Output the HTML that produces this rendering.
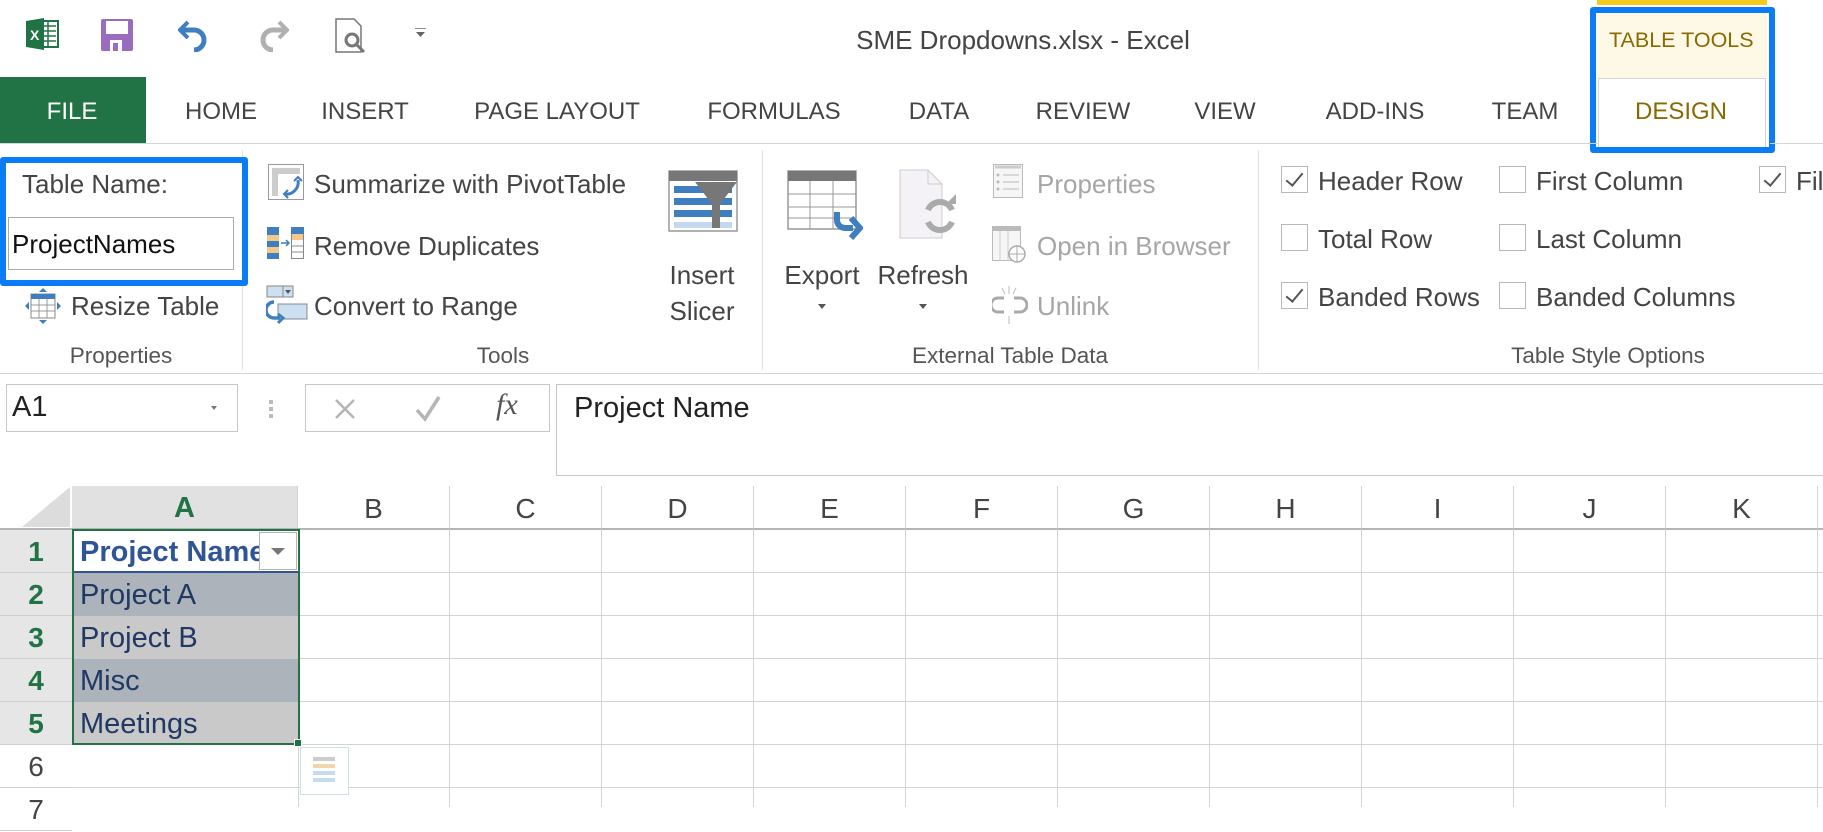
<!DOCTYPE html>
<html><head><meta charset="utf-8"><style>
*{margin:0;padding:0;box-sizing:border-box}
body{width:1823px;height:807px;overflow:hidden;background:#fff;font-family:"Liberation Sans",sans-serif;color:#444;position:relative}
.a{position:absolute;white-space:nowrap}
.tab{position:absolute;top:98px;font-size:24px;color:#444;transform:translateX(-50%)}
.rt{font-size:26px;color:#444}
.gl{position:absolute;top:343px;font-size:22.5px;color:#555;transform:translateX(-50%)}
.gray{color:#a6a6a6}
.cb{position:absolute;width:27px;height:27px;border:1px solid #b8b8b8;background:#fff}
.ck::after{content:"";position:absolute;left:8px;top:2px;width:7px;height:15px;border:solid #555;border-width:0 2px 2px 0;transform:rotate(40deg)}
.col{position:absolute;top:486px;height:43px;font-size:28px;color:#444;text-align:center;line-height:45px;border-right:1px solid #d4d4d4}
.vl{position:absolute;top:529px;height:278px;width:1px;background:#d4d4d4}
.hl{position:absolute;left:72px;width:1751px;height:1px;background:#d4d4d4}
.rn{position:absolute;left:0;width:72px;height:43px;font-size:28px;line-height:44px;text-align:center;background:#e6e6e6;color:#217346;font-weight:bold;border-bottom:1px solid #cfcfcf}
.cell{position:absolute;left:73px;width:225px;height:43px;font-size:29px;line-height:44px;padding-left:7px;color:#203864}
</style></head><body>
<!-- quick access toolbar -->
<svg class="a" style="left:26px;top:18px" width="34" height="32" viewBox="0 0 34 32"><rect x="10" y="3" width="22" height="26" fill="#fff" stroke="#217346" stroke-width="2"/><path d="M16 8h14M16 13h14M16 18h14M16 23h14M22 4v24" stroke="#217346" stroke-width="1.5"/><path d="M0 3l18-3v32L0 29z" fill="#217346"/><text x="4" y="22" font-size="14" font-weight="bold" fill="#fff" font-family="Liberation Sans">X</text></svg>
<svg class="a" style="left:101px;top:19px" width="32" height="32"><rect width="32" height="32" rx="2" fill="#9b6bbd"/><rect x="5" y="2" width="22" height="13" fill="#fff"/><rect x="9" y="21" width="12" height="11" fill="#fff"/><rect x="12" y="24" width="5" height="8" fill="#9b6bbd"/></svg>
<svg class="a" style="left:178px;top:18px" width="34" height="34"><path d="M10 4L2 12l8 8" fill="none" stroke="#3f7fbf" stroke-width="4"/><path d="M4 12h12a10 10 0 0 1 0 20" fill="none" stroke="#3f7fbf" stroke-width="5"/></svg>
<svg class="a" style="left:255px;top:18px" width="34" height="34"><path d="M24 4l8 8-8 8" fill="none" stroke="#b0b0b0" stroke-width="4"/><path d="M30 12H18a10 10 0 0 0 0 20" fill="none" stroke="#b0b0b0" stroke-width="5"/></svg>
<svg class="a" style="left:335px;top:18px" width="36" height="36"><path d="M1 1h18l7 7v26H1z" fill="#fff" stroke="#777" stroke-width="1.5"/><circle cx="17" cy="22" r="6" fill="none" stroke="#777" stroke-width="3"/><path d="M21 26l8 8" stroke="#777" stroke-width="3"/></svg>
<svg class="a" style="left:415px;top:28px" width="11" height="10"><path d="M0 0h11" stroke="#666" stroke-width="1.5"/><path d="M1 4h9l-4.5 5z" fill="#666"/></svg>
<div class="a" style="left:1023px;top:25px;font-size:26px;color:#444;transform:translateX(-50%)">SME Dropdowns.xlsx - Excel</div>
<!-- table tools -->
<div class="a" style="left:1597px;top:0;width:170px;height:5px;background:#f5cb1d"></div>
<div class="a" style="left:1597px;top:12px;width:170px;height:66px;background:#fdf9e6"></div>
<div class="a" style="left:1609px;top:28px;font-size:21.5px;color:#8a6a00">TABLE TOOLS</div>
<div class="a" style="left:1598px;top:78px;width:168px;height:70px;border:1px solid #d4d4d4;border-bottom:none;background:#fff"></div>
<div class="a" style="left:1590px;top:7px;width:185px;height:146px;border:6px solid #0a7cf7;border-radius:3px"></div>
<!-- tabs -->
<div class="a" style="left:0;top:77px;width:146px;height:67px;background:#217346"></div>
<div class="tab" style="left:72px;color:#fff">FILE</div>
<div class="tab" style="left:221px">HOME</div>
<div class="tab" style="left:365px">INSERT</div>
<div class="tab" style="left:557px">PAGE LAYOUT</div>
<div class="tab" style="left:774px">FORMULAS</div>
<div class="tab" style="left:939px">DATA</div>
<div class="tab" style="left:1083px">REVIEW</div>
<div class="tab" style="left:1225px">VIEW</div>
<div class="tab" style="left:1375px">ADD-INS</div>
<div class="tab" style="left:1525px">TEAM</div>
<div class="tab" style="left:1681px;color:#8a6a00">DESIGN</div>
<div class="a" style="left:0;top:143px;width:1598px;height:1px;background:#d4d4d4"></div>
<div class="a" style="left:1770px;top:143px;width:53px;height:1px;background:#d4d4d4"></div>
<!-- ribbon -->
<div class="a" style="left:0;top:373px;width:1823px;height:1px;background:#d4d4d4"></div>
<div class="a" style="left:242px;top:150px;width:1px;height:220px;background:#e1e1e1"></div>
<div class="a" style="left:762px;top:150px;width:1px;height:220px;background:#e1e1e1"></div>
<div class="a" style="left:1258px;top:150px;width:1px;height:220px;background:#e1e1e1"></div>
<div class="a" style="left:0;top:157px;width:248px;height:129px;border:6px solid #0a7cf7;border-radius:3px"></div>
<div class="a rt" style="left:22px;top:169px">Table Name:</div>
<div class="a" style="left:8px;top:217px;width:226px;height:53px;border:1px solid #ababab"></div>
<div class="a" style="left:12px;top:229px;font-size:26px;color:#111">ProjectNames</div>
<svg class="a" style="left:25px;top:288px" width="36" height="36"><path d="M18 0l4 4h-8zM18 36l4-4h-8zM0 18l4-4v8zM36 18l-4-4v8z" fill="#3f7fbf"/><rect x="6" y="6" width="24" height="24" fill="#fff" stroke="#888"/><rect x="6" y="6" width="24" height="5" fill="#3f7fbf"/><path d="M6 17h24M6 23h24M14 11v19M22 11v19" stroke="#999"/></svg>
<div class="a rt" style="left:71px;top:291px">Resize Table</div>
<div class="gl" style="left:121px">Properties</div>
<!-- tools -->
<svg class="a" style="left:268px;top:164px" width="36" height="36"><rect x="0.5" y="0.5" width="35" height="35" fill="#fff" stroke="#999"/><rect x="4" y="4" width="28" height="6" fill="#ccc"/><rect x="4" y="4" width="6" height="28" fill="#ccc"/><path d="M30 16a12 12 0 0 1-14 14" fill="none" stroke="#3f7fbf" stroke-width="3"/><path d="M26 17l4-4 4 4M20 26l-4 4 4 4" fill="none" stroke="#3f7fbf" stroke-width="2"/></svg>
<div class="a rt" style="left:314px;top:169px">Summarize with PivotTable</div>
<svg class="a" style="left:267px;top:227px" width="38" height="32"><rect x="0" y="0" width="12" height="32" fill="#3f7fbf"/><rect x="0" y="8" width="12" height="6" fill="#f3c98b"/><rect x="0" y="20" width="12" height="6" fill="#f3c98b"/><rect x="24.5" y="0.5" width="12" height="31" fill="#fff" stroke="#888"/><rect x="24" y="0" width="13" height="7" fill="#3f7fbf"/><rect x="25" y="7" width="11" height="6" fill="#f3c98b"/><path d="M25 19h12M25 25h12" stroke="#888"/><path d="M14 16h8M19 13l3 3-3 3" fill="none" stroke="#3f7fbf" stroke-width="1.5"/></svg>
<div class="a rt" style="left:314px;top:231px">Remove Duplicates</div>
<svg class="a" style="left:266px;top:285px" width="42" height="40"><rect x="1" y="1" width="26" height="11" fill="#cde0f2" stroke="#888"/><path d="M17 1v11" stroke="#888"/><path d="M19 5h6l-3 4z" fill="#555"/><rect x="12" y="19" width="29" height="15" fill="#cde0f2" stroke="#888"/><path d="M8 17a8 8 0 0 0 0 16h6" fill="none" stroke="#3f7fbf" stroke-width="3.5"/><path d="M12 29l5 4-5 5" fill="none" stroke="#3f7fbf" stroke-width="3"/></svg>
<div class="a rt" style="left:314px;top:291px">Convert to Range</div>
<svg class="a" style="left:668px;top:170px" width="70" height="62"><rect x="1" y="1" width="68" height="60" fill="#fff" stroke="#999" stroke-width="1.5"/><rect x="1" y="1" width="68" height="10" fill="#777"/><rect x="6" y="16" width="58" height="7" fill="#3f7fbf"/><rect x="6" y="28" width="58" height="7" fill="#3f7fbf"/><rect x="6" y="40" width="58" height="7" fill="#3f7fbf"/><rect x="6" y="52" width="58" height="6" fill="#c5d9ee"/><path d="M27 12h42L52 34v24h-8V34z" fill="#777"/></svg>
<div class="a rt" style="left:702px;top:260px;transform:translateX(-50%)">Insert</div>
<div class="a rt" style="left:702px;top:296px;transform:translateX(-50%)">Slicer</div>
<div class="gl" style="left:503px">Tools</div>
<!-- external -->
<svg class="a" style="left:787px;top:170px" width="76" height="72"><rect x="1" y="1" width="68" height="58" fill="#fff" stroke="#999" stroke-width="1.5"/><rect x="1" y="1" width="68" height="10" fill="#777"/><path d="M1 24h68M1 37h68M1 48h68M23 11v48M46 11v48" stroke="#999"/><path d="M50 42v8a8 8 0 0 0 8 8h8" fill="none" stroke="#3f7fbf" stroke-width="6"/><path d="M64 48l9 10-9 10" fill="none" stroke="#3f7fbf" stroke-width="6"/></svg>
<div class="a rt" style="left:822px;top:260px;transform:translateX(-50%)">Export</div>
<div class="a" style="left:818px;top:304px;border:4px solid transparent;border-top:5px solid #555"></div>
<svg class="a" style="left:898px;top:168px" width="68" height="76"><path d="M2 2h28l14 14v54H2z" fill="#f4f2f6" stroke="#ccc"/><path d="M30 2v14h14" fill="none" stroke="#ccc"/><path d="M54 42a13 13 0 0 0-24 0M30 54a13 13 0 0 0 24 0" fill="none" stroke="#aaa" stroke-width="6"/><path d="M48 36l10 0 0-10z" fill="#aaa"/></svg>
<div class="a rt" style="left:923px;top:260px;transform:translateX(-50%)">Refresh</div>
<div class="a" style="left:919px;top:304px;border:4px solid transparent;border-top:5px solid #555"></div>
<svg class="a" style="left:993px;top:164px" width="30" height="34"><rect x="0.5" y="0.5" width="29" height="33" fill="#f6f6f6" stroke="#bbb"/><path d="M2 3h26" stroke="#ccc" stroke-width="3"/><path d="M10 11h16M10 18h16M10 25h16" stroke="#bbb"/><circle cx="5" cy="11" r="1.5" fill="#bbb"/><circle cx="5" cy="18" r="1.5" fill="#bbb"/><circle cx="5" cy="25" r="1.5" fill="#bbb"/></svg>
<div class="a rt gray" style="left:1037px;top:169px">Properties</div>
<svg class="a" style="left:992px;top:226px" width="36" height="38"><rect x="0.5" y="0.5" width="28" height="34" fill="#f6f6f6" stroke="#bbb"/><rect x="0" y="0" width="29" height="5" fill="#bbb"/><path d="M8 5v30M16 5v30" stroke="#ccc"/><circle cx="25" cy="28" r="8" fill="#fff" stroke="#aaa" stroke-width="1.5"/><path d="M17 28h16M25 20v16" stroke="#aaa"/></svg>
<div class="a rt gray" style="left:1037px;top:231px">Open in Browser</div>
<svg class="a" style="left:992px;top:286px" width="36" height="38"><path d="M12 12H6a6 6 0 0 0 0 14h6M22 12h6a6 6 0 0 1 0 14h-6" fill="none" stroke="#aaa" stroke-width="3"/><path d="M17 0v8M17 30v8M10 2l3 6M24 2l-3 6" stroke="#bbb"/></svg>
<div class="a rt gray" style="left:1037px;top:291px">Unlink</div>
<div class="gl" style="left:1010px">External Table Data</div>
<!-- style options -->
<div class="cb ck" style="left:1281px;top:166px"></div><div class="a rt" style="left:1318px;top:166px">Header Row</div>
<div class="cb" style="left:1499px;top:166px"></div><div class="a rt" style="left:1536px;top:166px">First Column</div>
<div class="cb ck" style="left:1759px;top:166px"></div><div class="a rt" style="left:1796px;top:166px">Filter</div>
<div class="cb" style="left:1281px;top:224px"></div><div class="a rt" style="left:1318px;top:224px">Total Row</div>
<div class="cb" style="left:1499px;top:224px"></div><div class="a rt" style="left:1536px;top:224px">Last Column</div>
<div class="cb ck" style="left:1281px;top:282px"></div><div class="a rt" style="left:1318px;top:282px">Banded Rows</div>
<div class="cb" style="left:1499px;top:282px"></div><div class="a rt" style="left:1536px;top:282px">Banded Columns</div>
<div class="gl" style="left:1608px">Table Style Options</div>
<!-- formula bar -->
<div class="a" style="left:6px;top:384px;width:232px;height:48px;border:1px solid #c6c6c6"></div>
<div class="a" style="left:12px;top:391px;font-size:29px;color:#222">A1</div>
<div class="a" style="left:211px;top:406px;border:3px solid transparent;border-top:4px solid #777"></div>
<div class="a" style="left:269px;top:400px;width:4px;height:4px;background:#bbb;box-shadow:0 7px 0 #bbb,0 14px 0 #bbb"></div>
<div class="a" style="left:305px;top:384px;width:245px;height:48px;border:1px solid #c6c6c6"></div>
<svg class="a" style="left:333px;top:397px" width="24" height="24"><path d="M3 3l18 18M21 3L3 21" stroke="#b5b5b5" stroke-width="2.5"/></svg>
<svg class="a" style="left:414px;top:395px" width="28" height="28"><path d="M3 15l8 9L25 2" fill="none" stroke="#b5b5b5" stroke-width="3.5"/></svg>
<div class="a" style="left:496px;top:388px;font-size:30px;font-style:italic;font-family:'Liberation Serif',serif;color:#555">fx</div>
<div class="a" style="left:556px;top:384px;width:1280px;height:92px;border:1px solid #c6c6c6"></div>
<div class="a" style="left:574px;top:392px;font-size:29px;color:#222">Project Name</div>
<!-- grid headers -->
<div class="a" style="left:0;top:486px;width:72px;height:43px;background:#fff"></div>
<svg class="a" style="left:20px;top:487px" width="50" height="40"><path d="M50 0v40H2z" fill="#dcdcdc"/></svg>
<div class="col" style="left:72px;width:226px;background:#e1e1e1;color:#217346;font-weight:bold;font-size:29px">A</div>
<div class="col" style="left:298px;width:152px">B</div>
<div class="col" style="left:450px;width:152px">C</div>
<div class="col" style="left:602px;width:152px">D</div>
<div class="col" style="left:754px;width:152px">E</div>
<div class="col" style="left:906px;width:152px">F</div>
<div class="col" style="left:1058px;width:152px">G</div>
<div class="col" style="left:1210px;width:152px">H</div>
<div class="col" style="left:1362px;width:152px">I</div>
<div class="col" style="left:1514px;width:152px">J</div>
<div class="col" style="left:1666px;width:152px">K</div>
<div class="a" style="left:0;top:528px;width:1823px;height:2px;background:#b5b5b5"></div>
<!-- grid lines -->
<div class="vl" style="left:298px"></div><div class="vl" style="left:449px"></div><div class="vl" style="left:601px"></div><div class="vl" style="left:753px"></div><div class="vl" style="left:905px"></div><div class="vl" style="left:1057px"></div><div class="vl" style="left:1209px"></div><div class="vl" style="left:1361px"></div><div class="vl" style="left:1513px"></div><div class="vl" style="left:1665px"></div><div class="vl" style="left:1817px"></div>
<div class="hl" style="top:572px"></div><div class="hl" style="top:615px"></div><div class="hl" style="top:658px"></div><div class="hl" style="top:701px"></div><div class="hl" style="top:744px"></div><div class="hl" style="top:787px"></div>
<div class="a" style="left:71px;top:530px;width:1px;height:277px;background:#cfcfcf"></div>
<!-- row numbers -->
<div class="rn" style="top:530px">1</div>
<div class="rn" style="top:573px">2</div>
<div class="rn" style="top:616px">3</div>
<div class="rn" style="top:659px">4</div>
<div class="rn" style="top:702px">5</div>
<div class="rn" style="top:745px;background:#fff;color:#444;font-weight:normal">6</div>
<div class="rn" style="top:788px;background:#fff;color:#444;font-weight:normal">7</div>
<!-- table cells -->
<div class="cell" style="top:530px;background:#fff;font-weight:bold;color:#2f5597;border-bottom:2px solid #2f5597;overflow:hidden">Project Name</div>
<div class="a" style="left:259px;top:532px;width:38px;height:38px;background:#fff;border:1px solid #b5b5b5"></div>
<div class="a" style="left:271px;top:548px;border:7px solid transparent;border-top:7px solid #777;border-bottom:none"></div>
<div class="cell" style="top:573px;background:#acb3bb">Project A</div>
<div class="cell" style="top:616px;background:#c9c9c9">Project B</div>
<div class="cell" style="top:659px;background:#acb3bb">Misc</div>
<div class="cell" style="top:702px;background:#c9c9c9">Meetings</div>
<div class="a" style="left:72px;top:529px;width:228px;height:216px;border:2px solid #217346"></div>
<div class="a" style="left:294px;top:739px;width:8px;height:8px;background:#217346;border:1px solid #fff"></div>
<div class="a" style="left:300px;top:747px;width:49px;height:48px;border:1px solid #cfe0e8;background:#fff"></div>
<div class="a" style="left:313px;top:757px;width:22px;height:4px;background:#ccc"></div>
<div class="a" style="left:313px;top:764px;width:22px;height:4px;background:#f0d6a8"></div>
<div class="a" style="left:313px;top:771px;width:22px;height:4px;background:#c5dcef"></div>
<div class="a" style="left:313px;top:778px;width:22px;height:4px;background:#c5dcef"></div>
</body></html>
